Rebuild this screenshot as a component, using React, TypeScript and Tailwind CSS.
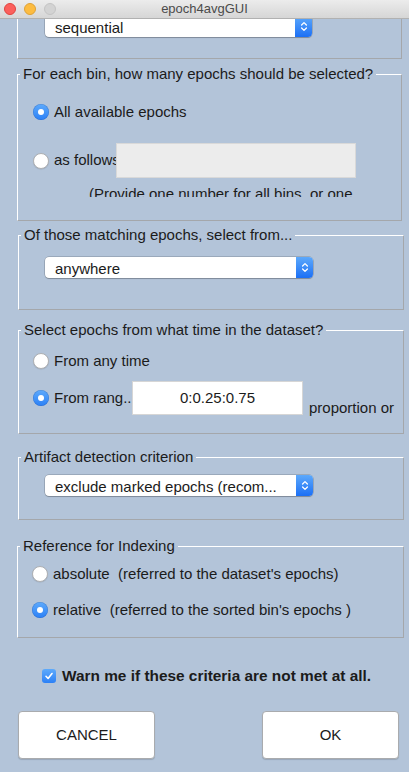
import type { ReactNode } from 'react';

const edge =
  'box-border border border-t-white border-l-white border-r-[#a4a7ab] border-b-[#a4a7ab]';

function Group({ title, className, children }: { title: string; className: string; children: ReactNode }) {
  return (
    <fieldset className={`${edge} ${className}`}>
      <legend className="ml-[2px] px-[3px] leading-[18px]">{title}</legend>
      {children}
    </fieldset>
  );
}

function Chevrons() {
  return (
    <svg width="8" height="13" viewBox="0 0 8 13" fill="none" stroke="white" strokeWidth="1.3" strokeLinecap="round" strokeLinejoin="round">
      <path d="M1.6 5 L4 2.6 L6.4 5" />
      <path d="M1.6 8 L4 10.4 L6.4 8" />
    </svg>
  );
}

function Popup({ value, className }: { value: string; className: string }) {
  return (
    <div
      className={`flex h-[21px] rounded-[4px] bg-white shadow-[0_0_0_0.5px_rgba(0,0,0,0.28),0_1px_1px_rgba(0,0,0,0.18)] ${className}`}
    >
      <span className="flex-1 truncate pl-[10px] pt-[1px] leading-[21px]">{value}</span>
      <span className="flex w-[17px] items-center justify-center rounded-r-[4px] bg-linear-to-b from-[#5ca8fb] to-[#1b6ff5]">
        <Chevrons />
      </span>
    </div>
  );
}

function Radio({ on }: { on?: boolean }) {
  if (on)
    return (
      <span className="flex h-[16px] w-[16px] shrink-0 items-center justify-center rounded-full bg-linear-to-b from-[#5eaafb] to-[#2b80f6] shadow-[inset_0_0_0_0.5px_rgba(0,40,120,0.25)]">
        <span className="h-[6px] w-[6px] rounded-full bg-white" />
      </span>
    );
  return <span className="h-[16px] w-[16px] shrink-0 rounded-full border border-[#aeb0b3] bg-white shadow-[0_0.5px_1px_rgba(0,0,0,0.12)]" />;
}

export default function App() {
  return (
    <div className="h-[772px] w-[409px] overflow-hidden bg-[#b3c4d9] font-['Liberation_Sans',Arial,sans-serif] text-[15px] text-[#1b1b1b]">
      {/* title bar */}
      <div className="relative flex h-[19px] items-center border-b border-[#b1b1b1] bg-linear-to-b from-[#ececec] to-[#d6d6d6]">
        <div className="flex gap-[8px] pl-[4px]">
          <span className="h-[12px] w-[12px] rounded-full border border-[#e0443e] bg-[#fc605c]" />
          <span className="h-[12px] w-[12px] rounded-full border border-[#dea236] bg-[#fdbc40]" />
          <span className="h-[12px] w-[12px] rounded-full border border-[#c4c4c4] bg-[#d3d3d3]" />
        </div>
        <span className="absolute inset-x-0 text-center text-[13px] leading-[18px] text-[#4b4b4b]">epoch4avgGUI</span>
      </div>

      {/* cut-off first panel */}
      <div className="ml-[17px] h-[40px] w-[385px] overflow-hidden border-x border-b border-l-white border-r-[#a4a7ab] border-b-[#a4a7ab]">
        <Popup value="sequential" className="-mt-[3px] ml-[27px] w-[267px]" />
      </div>

      <Group title="For each bin, how many epochs should be selected?" className="ml-[17px] mt-[6px] h-[156px] w-[385px]">
        <div className="mt-[19px] flex h-[20px] items-center gap-[5px] pl-[15px]">
          <Radio on />
          <span>All available epochs</span>
        </div>
        <div className="mt-[21px] flex h-[35px] items-center pl-[15px]">
          <Radio />
          <span className="ml-[5px] w-[62px] whitespace-nowrap">as follows</span>
          <div className="relative z-10 h-[35px] w-[240px] border border-[#d9d9d9] bg-[#ececec]" />
        </div>
        <div className="mt-[7px] h-[12px] overflow-hidden pl-[71px] leading-[18px] whitespace-nowrap">
          (Provide one number for all bins, or one
        </div>
      </Group>

      <Group title="Of those matching epochs, select from..." className="ml-[18px] mt-[5px] h-[84px] w-[386px]">
        <Popup value="anywhere" className="ml-[26px] mt-[13px] w-[268px]" />
      </Group>

      <Group title="Select epochs from what time in the dataset?" className="ml-[18px] mt-[11px] h-[113px] w-[386px]">
        <div className="mt-[12px] flex h-[20px] items-center gap-[5px] pl-[14px]">
          <Radio />
          <span>From any time</span>
        </div>
        <div className="mt-[10px] flex items-start pl-[14px]">
          <div className="flex h-[34px] items-center gap-[5px]">
            <Radio on />
            <span className="w-[78px] whitespace-nowrap">From rang..</span>
          </div>
          <div className="flex h-[34px] w-[171px] items-center justify-center border border-[#d6d6d6] bg-white">0:0.25:0.75</div>
          <span className="ml-[6px] mt-[18px] whitespace-nowrap leading-[18px]">proportion or</span>
        </div>
      </Group>

      <Group title="Artifact detection criterion" className="ml-[18px] mt-[14px] h-[72px] w-[386px]">
        <Popup value="exclude marked epochs (recom..." className="ml-[26px] mt-[9px] w-[268px]" />
      </Group>

      <Group title="Reference for Indexing" className="ml-[17px] mt-[17px] h-[101px] w-[387px]">
        <div className="mt-[9px] flex h-[20px] items-center gap-[5px] pl-[14px]">
          <Radio />
          <span className="whitespace-pre">absolute  (referred to the dataset's epochs)</span>
        </div>
        <div className="mt-[16px] flex h-[20px] items-center gap-[5px] pl-[14px]">
          <Radio on />
          <span className="whitespace-pre">relative  (referred to the sorted bin's epochs )</span>
        </div>
      </Group>

      {/* warn checkbox */}
      <div className="ml-[42px] mt-[29px] flex h-[18px] items-center gap-[6px]">
        <span className="flex h-[14px] w-[14px] items-center justify-center rounded-[3px] bg-linear-to-b from-[#5eaafb] to-[#2b80f6]">
          <svg width="10" height="10" viewBox="0 0 10 10" fill="none" stroke="white" strokeWidth="1.6" strokeLinecap="round" strokeLinejoin="round">
            <path d="M2 5.3 L4.1 7.5 L8 2.5" />
          </svg>
        </span>
        <span className="text-[15.4px] font-bold">Warn me if these criteria are not met at all.</span>
      </div>

      {/* buttons */}
      <div className="ml-[18px] mr-[10px] mt-[26px] flex justify-between">
        <button className="h-[48px] w-[137px] rounded-[4px] border border-[#a9abae] bg-white shadow-[0_1px_1px_rgba(0,0,0,0.15)]">CANCEL</button>
        <button className="h-[48px] w-[137px] rounded-[4px] border border-[#a9abae] bg-white shadow-[0_1px_1px_rgba(0,0,0,0.15)]">OK</button>
      </div>
    </div>
  );
}
